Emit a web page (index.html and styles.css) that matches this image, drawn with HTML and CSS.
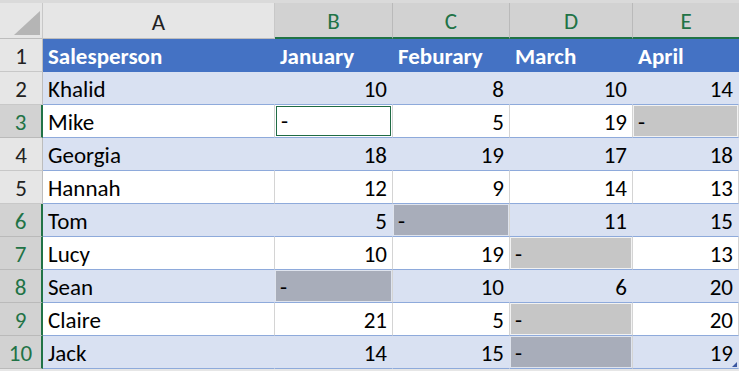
FILE: index.html
```html
<!DOCTYPE html>
<html>
<head>
<meta charset="utf-8">
<link rel="stylesheet" href="styles.css">
</head>
<body>
<div class="topband"></div>
<div class="sheet">
  <div class="corner"><svg class="tri" width="26" height="24" viewBox="0 0 26 24"><polygon points="26,0 26,24 0,24" fill="#b5b5b5"/></svg></div>
  <div class="ch">A</div>
  <div class="ch sel-col">B</div>
  <div class="ch sel-col">C</div>
  <div class="ch sel-col">D</div>
  <div class="ch sel-col last">E</div>

  <div class="rh">1</div>
  <div class="c hd">Salesperson</div>
  <div class="c hd">January</div>
  <div class="c hd">Feburary</div>
  <div class="c hd">March</div>
  <div class="c hd">April</div>

  <div class="rh">2</div>
  <div class="c band">Khalid</div>
  <div class="c band num">10</div>
  <div class="c band num">8</div>
  <div class="c band num">10</div>
  <div class="c band num">14</div>

  <div class="rh sel-row">3</div>
  <div class="c">Mike</div>
  <div class="c active"><span class="box">-</span></div>
  <div class="c num">5</div>
  <div class="c num">19</div>
  <div class="c pick">-</div>

  <div class="rh">4</div>
  <div class="c band">Georgia</div>
  <div class="c band num">18</div>
  <div class="c band num">19</div>
  <div class="c band num">17</div>
  <div class="c band num">18</div>

  <div class="rh">5</div>
  <div class="c">Hannah</div>
  <div class="c num">12</div>
  <div class="c num">9</div>
  <div class="c num">14</div>
  <div class="c num">13</div>

  <div class="rh sel-row">6</div>
  <div class="c band">Tom</div>
  <div class="c band num">5</div>
  <div class="c band pick">-</div>
  <div class="c band num">11</div>
  <div class="c band num">15</div>

  <div class="rh sel-row">7</div>
  <div class="c">Lucy</div>
  <div class="c num">10</div>
  <div class="c num">19</div>
  <div class="c pick">-</div>
  <div class="c num">13</div>

  <div class="rh sel-row">8</div>
  <div class="c band">Sean</div>
  <div class="c band pick">-</div>
  <div class="c band num">10</div>
  <div class="c band num">6</div>
  <div class="c band num">20</div>

  <div class="rh sel-row">9</div>
  <div class="c">Claire</div>
  <div class="c num">21</div>
  <div class="c num">5</div>
  <div class="c pick">-</div>
  <div class="c num">20</div>

  <div class="rh sel-row">10</div>
  <div class="c band">Jack</div>
  <div class="c band num">14</div>
  <div class="c band num">15</div>
  <div class="c band pick">-</div>
  <div class="c band num lastcell">19<span class="handle"></span></div>
</div>
</body>
</html>
```

FILE: styles.css
```css
* { box-sizing: border-box; }
html, body { margin: 0; padding: 0; background: #e6e6e6; }
body { width: 739px; height: 371px; overflow: hidden; font-family: Carlito, Lato, "Liberation Sans", sans-serif; }
.topband { height: 3px; background: #dadada; }
.sheet {
  display: grid;
  grid-template-columns: 43px 232px 118px 117px 123px 106px;
  grid-template-rows: 36px repeat(10, 33px);
  background: #fff;
}
.corner {
  background: #e6e6e6;
  border-right: 1px solid #c8c8c8;
  border-bottom: 1px solid #bdbdbd;
  display: flex;
  align-items: flex-end;
  justify-content: flex-end;
  padding: 0 2px 3px 0;
}
.ch {
  background: #e6e6e6;
  border-right: 1px solid #c8c8c8;
  border-bottom: 1px solid #bdbdbd;
  display: flex;
  align-items: center;
  justify-content: center;
  font-size: 23px;
  color: #222;
  padding-top: 2px;
}
.ch.sel-col {
  background: #d2d2d2;
  color: #217346;
  border-bottom: 2px solid #217346;
  border-right-color: #bababa;
}
.ch.last { border-right: none; }
.rh {
  background: #e6e6e6;
  border-right: 1px solid #bdbdbd;
  border-bottom: 1px solid #c8c8c8;
  display: flex;
  align-items: center;
  justify-content: center;
  font-size: 23px;
  color: #222;
  padding-top: 1px;
}
.rh.sel-row {
  background: #d2d2d2;
  color: #217346;
  border-right: 2px solid #217346;
  border-bottom-color: #bababa;
}
.c {
  display: flex;
  align-items: center;
  padding: 1px 5px 0 5px;
  font-size: 23px;
  color: #000;
  background: #fff;
  border-right: 1px solid #d4d4d4;
  border-bottom: 1px solid #8eaadb;
  white-space: nowrap;
}
.c.band { background: #d9e1f2; border-right-color: #d9e1f2; }
.c.hd {
  background: #4472c4;
  border-right-color: #4472c4;
  border-bottom-color: #4472c4;
  color: #fff;
  font-weight: bold;
}
.c.num { justify-content: flex-end; }
.c.pick {
  background: #c6c6c6;
  box-shadow: inset 0 0 0 1px #f2f2f2;
  border-right-color: #d4d4d4;
}
.c.band.pick { background: #a8adba; box-shadow: inset 0 0 0 1px #dfe4ee; }
.c.active { padding: 1px; }
.box {
  flex: 1;
  align-self: stretch;
  display: flex;
  align-items: center;
  padding: 0 4px;
  border: 1px solid #1f6b44;
  background: #fff;
}
.lastcell { position: relative; }
.handle {
  position: absolute;
  right: 1px;
  bottom: 1px;
  width: 0;
  height: 0;
  border-left: 5px solid transparent;
  border-bottom: 5px solid #3a56a0;
}
```
